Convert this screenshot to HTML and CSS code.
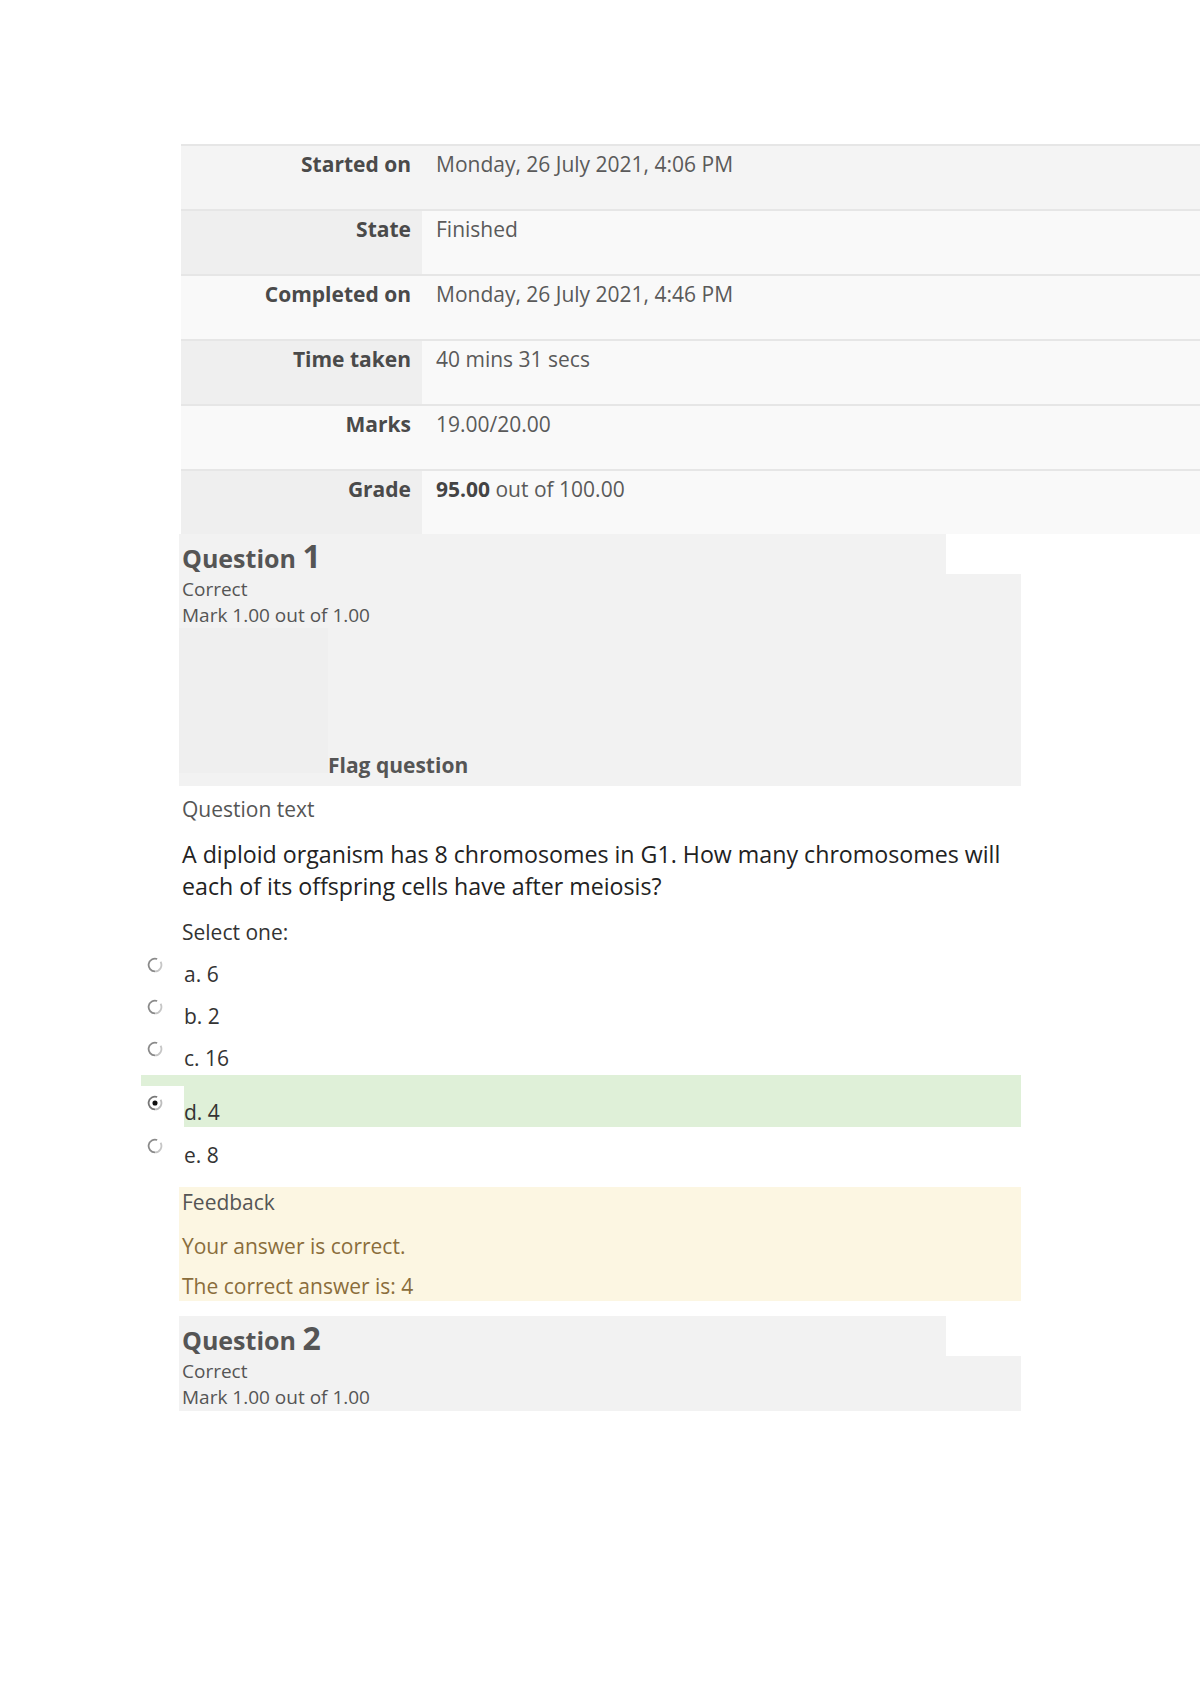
FILE: index.html
```html
<!DOCTYPE html>
<html lang="en">
<head>
  <meta charset="UTF-8" />
  <meta name="viewport" content="width=device-width, initial-scale=1.0"/>
  <title>Quiz review</title>
  <link rel="stylesheet" href="styles.css">
</head>
<body>
  <div class="page">
    <table class="summary">
      <tr class="first"><th>Started on</th><td>Monday, 26 July 2021, 4:06 PM</td></tr>
      <tr class="alt"><th>State</th><td>Finished</td></tr>
      <tr><th>Completed on</th><td>Monday, 26 July 2021, 4:46 PM</td></tr>
      <tr class="alt"><th>Time taken</th><td>40 mins 31 secs</td></tr>
      <tr><th>Marks</th><td>19.00/20.00</td></tr>
      <tr class="alt"><th>Grade</th><td><b>95.00</b> out of 100.00</td></tr>
    </table>

    <div class="que">
      <div class="que-head"><h3>Question <span class="qno">1</span></h3></div>
      <div class="que-info">
        <div class="state">Correct</div>
        <div class="grade">Mark 1.00 out of 1.00</div>
        <div class="flag-row">
          <div class="flag-spacer"></div>
          <div class="flag">Flag question</div>
        </div>
      </div>

      <div class="qtext-label">Question text</div>
      <div class="qtext">A diploid organism has 8 chromosomes in G1. How many chromosomes will each of its offspring cells have after meiosis?</div>
      <div class="prompt">Select one:</div>

      <div class="answer">
        <div class="opt">
          <div class="radio-cell">
            <svg class="radio" width="16" height="16" viewBox="0 0 15 15"><path d="M9.55 1.86 A6 6 0 1 0 7.5 13.5" fill="none" stroke="#8a8a8a" stroke-width="1.7"/><path d="M7.5 13.5 A6 6 0 0 0 12.7 4.5" fill="none" stroke="#c6c6c6" stroke-width="1.7"/></svg>
          </div>
          <div class="opt-label">a. 6</div>
        </div>
        <div class="opt">
          <div class="radio-cell">
            <svg class="radio" width="16" height="16" viewBox="0 0 15 15"><path d="M9.55 1.86 A6 6 0 1 0 7.5 13.5" fill="none" stroke="#8a8a8a" stroke-width="1.7"/><path d="M7.5 13.5 A6 6 0 0 0 12.7 4.5" fill="none" stroke="#c6c6c6" stroke-width="1.7"/></svg>
          </div>
          <div class="opt-label">b. 2</div>
        </div>
        <div class="opt">
          <div class="radio-cell">
            <svg class="radio" width="16" height="16" viewBox="0 0 15 15"><path d="M9.55 1.86 A6 6 0 1 0 7.5 13.5" fill="none" stroke="#8a8a8a" stroke-width="1.7"/><path d="M7.5 13.5 A6 6 0 0 0 12.7 4.5" fill="none" stroke="#c6c6c6" stroke-width="1.7"/></svg>
          </div>
          <div class="opt-label">c. 16</div>
        </div>
        <div class="opt checked">
          <div class="radio-cell">
            <svg class="radio" width="16" height="16" viewBox="0 0 15 15"><path d="M9.55 1.86 A6 6 0 1 0 7.5 13.5" fill="none" stroke="#777" stroke-width="1.7"/><path d="M7.5 13.5 A6 6 0 0 0 12.7 4.5" fill="none" stroke="#bdbdbd" stroke-width="1.7"/><circle cx="7.5" cy="7.5" r="2.4" fill="#111"/></svg>
          </div>
          <div class="opt-label">d. 4</div>
        </div>
        <div class="opt">
          <div class="radio-cell">
            <svg class="radio" width="16" height="16" viewBox="0 0 15 15"><path d="M9.55 1.86 A6 6 0 1 0 7.5 13.5" fill="none" stroke="#8a8a8a" stroke-width="1.7"/><path d="M7.5 13.5 A6 6 0 0 0 12.7 4.5" fill="none" stroke="#c6c6c6" stroke-width="1.7"/></svg>
          </div>
          <div class="opt-label">e. 8</div>
        </div>
      </div>

      <div class="feedback">
        <div class="fb-title">Feedback</div>
        <div class="fb-line">Your answer is correct.</div>
        <div class="fb-line fb-answer">The correct answer is: 4</div>
      </div>
    </div>

    <div class="que que-next">
      <div class="que-head"><h3>Question <span class="qno">2</span></h3></div>
      <div class="que-info">
        <div class="state">Correct</div>
        <div class="grade">Mark 1.00 out of 1.00</div>
      </div>
    </div>
  </div>
</body>
</html>
```

FILE: styles.css
```css
body {
  margin: 0;
  font-family: 'Open Sans', sans-serif;
  background: #ffffff;
  color: #333;
}

.page {
  padding: 144px 0 0 179px;
}

/* summary table */
.summary {
  margin-left: 2px;
  width: 1019px;
  border-collapse: separate;
  border-spacing: 0;
  font-size: 21px;
  line-height: 30px;
}

.summary th,
.summary td {
  height: 65px;
  box-sizing: border-box;
  border-top: 2px solid #e6e6e6;
  vertical-align: top;
  padding-top: 3px;
  background: #f9f9f9;
}

.summary th {
  width: 241px;
  text-align: right;
  padding-right: 11px;
  font-weight: 700;
  color: #4a4a4a;
}

.summary td {
  padding-left: 14px;
  color: #5a5a5a;
}

.summary td b {
  color: #444;
}

.summary tr.alt th {
  background: #efefef;
}

.summary tr.first th,
.summary tr.first td {
  background: #f4f4f4;
}

/* question block */
.que-head {
  width: 767px;
  height: 40px;
  box-sizing: border-box;
  padding-left: 3px;
  background: #f2f2f2;
}

.que-head h3 {
  margin: 0;
  padding-top: 6px;
  font-size: 25px;
  line-height: 34px;
  font-weight: 700;
  color: #555;
}

.que-head .qno {
  font-size: 32px;
  line-height: 1;
}

.que-info {
  width: 842px;
  box-sizing: border-box;
  padding: 2px 0 5px 3px;
  background: #f2f2f2;
  font-size: 19px;
  line-height: 26px;
  color: #555;
}

.flag-row {
  display: flex;
  align-items: flex-end;
  margin-left: -3px;
}

.flag-spacer {
  width: 149px;
  height: 145px;
  margin-bottom: 8px;
  background: #efefef;
}

.flag {
  font-size: 21px;
  line-height: 31px;
  font-weight: 700;
  color: #555;
}

.qtext-label {
  margin-top: 8px;
  padding-left: 3px;
  font-size: 21px;
  line-height: 30px;
  color: #555;
}

.qtext {
  width: 839px;
  margin-top: 14px;
  padding-left: 3px;
  font-size: 23.2px;
  line-height: 32px;
  color: #222;
}

.prompt {
  margin-top: 15px;
  padding-left: 3px;
  font-size: 21px;
  line-height: 30px;
  color: #333;
}

/* answers */
.answer {
  width: 880px;
  margin: 12px 0 0 -38px;
}

.opt {
  display: flex;
  margin-bottom: 12px;
}

.radio-cell {
  flex: none;
  width: 43px;
  box-sizing: border-box;
  padding-left: 6px;
}

.radio {
  display: block;
  margin-top: -2px;
}

.opt-label {
  font-size: 21px;
  line-height: 30px;
  color: #333;
}

.opt.checked {
  margin: -10px 0 13px;
  background: #dff0d8;
}

.opt.checked .radio-cell {
  height: 41px;
  margin-top: 11px;
  padding-top: 11px;
  background: #ffffff;
}

.opt.checked .opt-label {
  padding-top: 22px;
}

/* feedback */
.feedback {
  width: 842px;
  margin-top: 17px;
  box-sizing: border-box;
  padding: 0 0 0 3px;
  background: #fcf6e2;
  font-size: 21px;
  line-height: 30px;
}

.fb-title {
  color: #555;
}

.fb-line {
  margin-top: 14px;
  color: #8a6d3b;
}

.fb-line.fb-answer {
  margin-top: 10px;
}

.que-next {
  margin-top: 15px;
}

.que-next .que-info {
  padding-bottom: 1px;
}
```
